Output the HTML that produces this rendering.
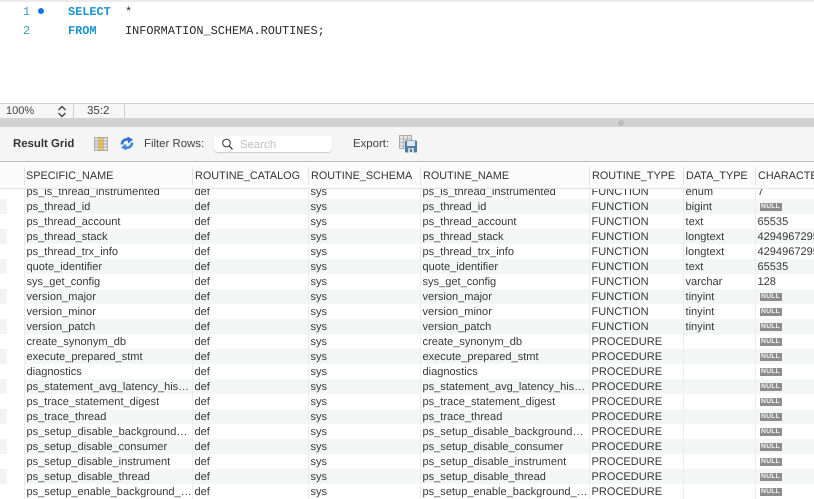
<!DOCTYPE html>
<html><head><meta charset="utf-8"><style>
html,body{margin:0;padding:0;background:#fff}
body{width:814px;height:497px;position:relative;overflow:hidden;font-family:"Liberation Sans",sans-serif;color:#333;text-rendering:geometricPrecision}
.a{position:absolute;white-space:nowrap}
.m{font-family:"Liberation Mono",monospace;font-size:11.9px;line-height:19px;color:#2b2b2b}
.k{color:#1b93cc;font-weight:bold;font-size:11.9px}
.n{color:#3f97b8}
.t{font-size:11.4px;line-height:16px;color:#444}
#g{position:absolute;left:0;top:184px;width:814px;border-collapse:collapse;table-layout:fixed;font-size:11.05px;color:#383838}
#g td{height:15px;padding:2px 0 0 2px;white-space:nowrap;overflow:hidden;border-left:1px solid #ececec;line-height:13px;box-sizing:border-box}
#g td:first-child{border-left:0;padding:0}
#g tr:nth-child(odd){background:#fff}
#g tr:nth-child(even){background:#f4f5f5}
#g tr:nth-child(even) td:first-child{background:linear-gradient(90deg,#f3f3f3 7px,#fff 7px)}
i.u{display:block;width:22px;height:8px;margin:-2px 0 0 2px;background:#8d8d8d;color:#f2f2f2;font:bold 6.8px/8px "Liberation Sans",sans-serif;text-align:center;letter-spacing:.2px}
#h{position:absolute;left:0;top:161px;width:814px;height:28px;background:#fbfbfb;border-top:1px solid #bcbcbc;border-bottom:1px solid #e2e2e2;box-sizing:border-box;z-index:2;font-size:10.85px;color:#333}
#h span{position:absolute;top:7px;line-height:15px}
#h b{position:absolute;top:5px;height:18px;width:1px;background:#e2e2e2}
</style></head><body>
<div class="a" style="left:0;top:0;width:814px;height:2px;background:#ececec"></div>
<div class="a" style="left:66px;top:0;width:1px;height:2px;background:#ddd"></div>
<div class="a m n" style="left:23px;top:3px">1</div>
<div class="a" style="left:38px;top:8px;width:6px;height:6px;border-radius:50%;background:#1273e6"></div>
<div class="a m k" style="left:68px;top:3px">SELECT</div>
<div class="a m" style="left:125px;top:3px">*</div>
<div class="a m n" style="left:23px;top:22px">2</div>
<div class="a m k" style="left:68px;top:22px">FROM</div>
<div class="a m" style="left:125px;top:22px">INFORMATION_SCHEMA.ROUTINES;</div>

<div class="a" style="left:0;top:103px;width:814px;height:15px;background:#f6f6f6;border-top:1px solid #cfcfcf;box-sizing:content-box"></div>
<div class="a" style="left:6px;top:104px;font-size:11px;line-height:14px;color:#444">100%</div>
<svg class="a" style="left:57px;top:104px" width="10" height="15" viewBox="0 0 10 15"><path d="M1.5 6L5 2.5L8.5 6M1.5 9L5 12.5L8.5 9" fill="none" stroke="#444" stroke-width="1.4"/></svg>
<div class="a" style="left:73px;top:104px;width:1px;height:14px;background:#d2d2d2"></div>
<div class="a" style="left:124px;top:104px;width:1px;height:14px;background:#d2d2d2"></div>
<div class="a" style="left:87px;top:104px;font-size:11.5px;line-height:14px;color:#444">35:2</div>
<div class="a" style="left:0;top:118px;width:814px;height:9px;background:#d2d2d2"></div>
<div class="a" style="left:618px;top:120px;width:6px;height:6px;border-radius:50%;background:#bbb"></div>
<div class="a" style="left:0;top:127px;width:814px;height:34px;background:#f5f5f5"></div>

<div class="a" style="left:13px;top:136px;font-size:11.4px;font-weight:bold;line-height:16px;color:#333">Result Grid</div>
<svg class="a" style="left:94px;top:137px" width="14" height="14" viewBox="0 0 14 14"><rect x=".5" y=".5" width="13" height="13" fill="#ddd" stroke="#aaa"/><rect x="5" y="1" width="4" height="12" fill="#f7c63a"/><path d="M1 4H13M1 7H13M1 10H13M4.5 1V13M9.5 1V13" stroke="#a8a8a8" stroke-width=".7" fill="none"/></svg>
<svg class="a" style="left:119px;top:136px" width="16" height="15" viewBox="0 0 16 15"><path d="M3 8.5A5 5 0 0 1 10.5 4" fill="none" stroke="#2f74c9" stroke-width="2.6"/><path d="M8.5 0.5L14 3.5L9 7.5Z" fill="#2f74c9"/><path d="M13 6.5A5 5 0 0 1 5.5 11" fill="none" stroke="#3f8ad8" stroke-width="2.6"/><path d="M7.5 14.5L2 11.5L7 7.5Z" fill="#3f8ad8"/></svg>
<div class="a t" style="left:144px;top:136px">Filter Rows:</div>
<div class="a" style="left:214px;top:136px;width:118px;height:16px;background:#fff;border-radius:4px;box-shadow:0 1px 1px #ccc"></div>
<svg class="a" style="left:221px;top:137px" width="13" height="14" viewBox="0 0 13 14"><circle cx="5.5" cy="6" r="3.8" fill="none" stroke="#444" stroke-width="1.1"/><path d="M8.3 9L11.5 12.5" stroke="#444" stroke-width="1.3"/></svg>
<div class="a t" style="left:240px;top:137px;color:#c0c0c0">Search</div>
<div class="a t" style="left:353px;top:136px">Export:</div>
<svg class="a" style="left:399px;top:135px" width="19" height="18" viewBox="0 0 19 18"><rect x=".5" y=".5" width="12" height="13" fill="#e6e6e6" stroke="#aaa"/><path d="M.5 4H12.5M.5 7.5H12.5M.5 11H12.5M4.5 .5V13.5M8.5 .5V13.5" stroke="#aaa" stroke-width=".8"/><rect x="6" y="5.5" width="12" height="12" rx="1" fill="#4a7fa3"/><rect x="8" y="6" width="8" height="5" fill="#dfe9ef"/><rect x="9" y="13" width="6" height="4.5" fill="#c9d6de"/><rect x="11" y="14" width="2" height="3" fill="#4a7fa3"/></svg>

<div id="h">
<b style="left:24px"></b><span style="left:26px">SPECIFIC_NAME</span>
<b style="left:192px"></b><span style="left:195px">ROUTINE_CATALOG</span>
<b style="left:308px"></b><span style="left:311px">ROUTINE_SCHEMA</span>
<b style="left:420px"></b><span style="left:423px">ROUTINE_NAME</span>
<b style="left:589px"></b><span style="left:592px">ROUTINE_TYPE</span>
<b style="left:683px"></b><span style="left:686px">DATA_TYPE</span>
<b style="left:755px"></b><span style="left:758px">CHARACTER</span>
</div>

<table id="g"><colgroup><col style="width:24px"><col style="width:168px"><col style="width:116px"><col style="width:112px"><col style="width:169px"><col style="width:94px"><col style="width:72px"><col style="width:59px"></colgroup>
<tr><td></td><td>ps_is_thread_instrumented</td><td>def</td><td>sys</td><td>ps_is_thread_instrumented</td><td>FUNCTION</td><td>enum</td><td>7</td></tr>
<tr><td></td><td>ps_thread_id</td><td>def</td><td>sys</td><td>ps_thread_id</td><td>FUNCTION</td><td>bigint</td><td><i class="u">NULL</i></td></tr>
<tr><td></td><td>ps_thread_account</td><td>def</td><td>sys</td><td>ps_thread_account</td><td>FUNCTION</td><td>text</td><td>65535</td></tr>
<tr><td></td><td>ps_thread_stack</td><td>def</td><td>sys</td><td>ps_thread_stack</td><td>FUNCTION</td><td>longtext</td><td>4294967295</td></tr>
<tr><td></td><td>ps_thread_trx_info</td><td>def</td><td>sys</td><td>ps_thread_trx_info</td><td>FUNCTION</td><td>longtext</td><td>4294967295</td></tr>
<tr><td></td><td>quote_identifier</td><td>def</td><td>sys</td><td>quote_identifier</td><td>FUNCTION</td><td>text</td><td>65535</td></tr>
<tr><td></td><td>sys_get_config</td><td>def</td><td>sys</td><td>sys_get_config</td><td>FUNCTION</td><td>varchar</td><td>128</td></tr>
<tr><td></td><td>version_major</td><td>def</td><td>sys</td><td>version_major</td><td>FUNCTION</td><td>tinyint</td><td><i class="u">NULL</i></td></tr>
<tr><td></td><td>version_minor</td><td>def</td><td>sys</td><td>version_minor</td><td>FUNCTION</td><td>tinyint</td><td><i class="u">NULL</i></td></tr>
<tr><td></td><td>version_patch</td><td>def</td><td>sys</td><td>version_patch</td><td>FUNCTION</td><td>tinyint</td><td><i class="u">NULL</i></td></tr>
<tr><td></td><td>create_synonym_db</td><td>def</td><td>sys</td><td>create_synonym_db</td><td>PROCEDURE</td><td></td><td><i class="u">NULL</i></td></tr>
<tr><td></td><td>execute_prepared_stmt</td><td>def</td><td>sys</td><td>execute_prepared_stmt</td><td>PROCEDURE</td><td></td><td><i class="u">NULL</i></td></tr>
<tr><td></td><td>diagnostics</td><td>def</td><td>sys</td><td>diagnostics</td><td>PROCEDURE</td><td></td><td><i class="u">NULL</i></td></tr>
<tr><td></td><td>ps_statement_avg_latency_his…</td><td>def</td><td>sys</td><td>ps_statement_avg_latency_his…</td><td>PROCEDURE</td><td></td><td><i class="u">NULL</i></td></tr>
<tr><td></td><td>ps_trace_statement_digest</td><td>def</td><td>sys</td><td>ps_trace_statement_digest</td><td>PROCEDURE</td><td></td><td><i class="u">NULL</i></td></tr>
<tr><td></td><td>ps_trace_thread</td><td>def</td><td>sys</td><td>ps_trace_thread</td><td>PROCEDURE</td><td></td><td><i class="u">NULL</i></td></tr>
<tr><td></td><td>ps_setup_disable_background…</td><td>def</td><td>sys</td><td>ps_setup_disable_background…</td><td>PROCEDURE</td><td></td><td><i class="u">NULL</i></td></tr>
<tr><td></td><td>ps_setup_disable_consumer</td><td>def</td><td>sys</td><td>ps_setup_disable_consumer</td><td>PROCEDURE</td><td></td><td><i class="u">NULL</i></td></tr>
<tr><td></td><td>ps_setup_disable_instrument</td><td>def</td><td>sys</td><td>ps_setup_disable_instrument</td><td>PROCEDURE</td><td></td><td><i class="u">NULL</i></td></tr>
<tr><td></td><td>ps_setup_disable_thread</td><td>def</td><td>sys</td><td>ps_setup_disable_thread</td><td>PROCEDURE</td><td></td><td><i class="u">NULL</i></td></tr>
<tr><td></td><td>ps_setup_enable_background_…</td><td>def</td><td>sys</td><td>ps_setup_enable_background_…</td><td>PROCEDURE</td><td></td><td><i class="u">NULL</i></td></tr>
</table>
</body></html>
